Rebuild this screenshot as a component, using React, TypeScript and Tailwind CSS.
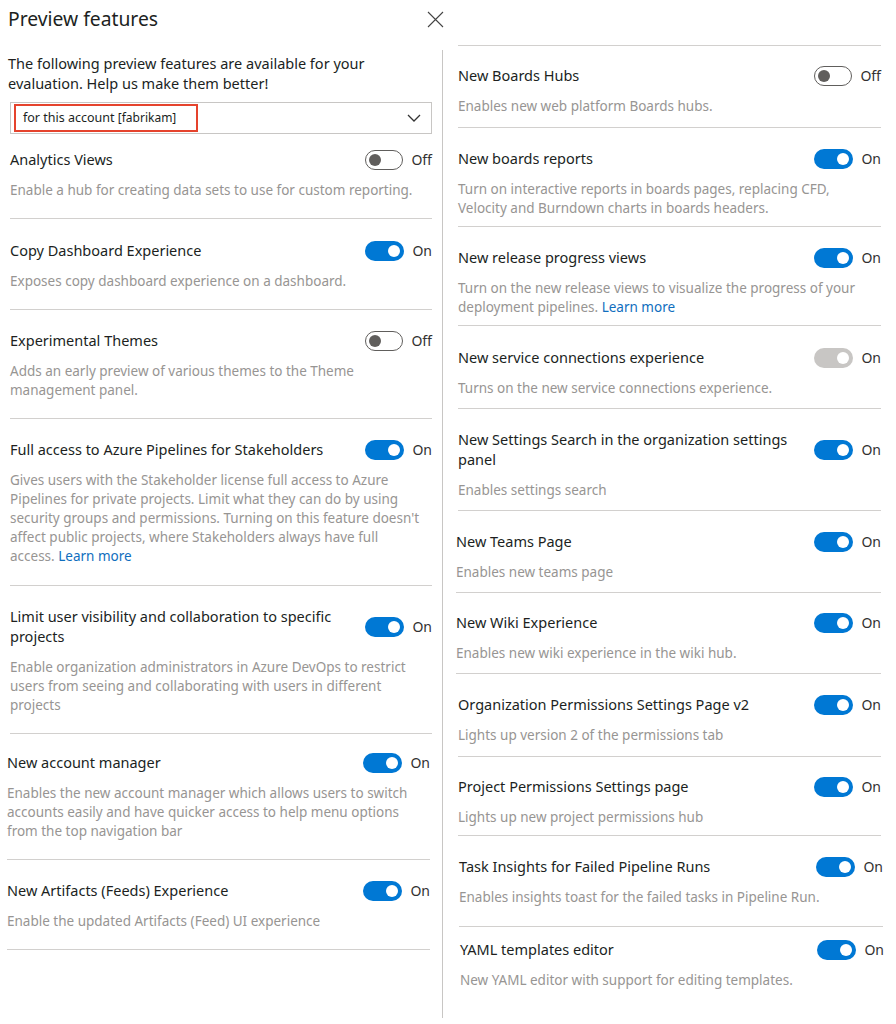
import React from "react";

type State = "on" | "off" | "disabled";

type Feature = {
  title: string[];
  desc: React.ReactNode[];
  state: State;
  box: string;
  last?: boolean;
};

const Learn = () => <span className="text-[#106ebe]">Learn more</span>;

const leftItems: Feature[] = [
  {
    title: ["Analytics Views"],
    desc: ["Enable a hub for creating data sets to use for custom reporting."],
    state: "off",
    box: "pt-[16px] pb-[19px]",
  },
  {
    title: ["Copy Dashboard Experience"],
    desc: ["Exposes copy dashboard experience on a dashboard."],
    state: "on",
    box: "pt-[22px] pb-[19px]",
  },
  {
    title: ["Experimental Themes"],
    desc: ["Adds an early preview of various themes to the Theme", "management panel."],
    state: "off",
    box: "pt-[21px] pb-[19px]",
  },
  {
    title: ["Full access to Azure Pipelines for Stakeholders"],
    desc: [
      "Gives users with the Stakeholder license full access to Azure",
      "Pipelines for private projects. Limit what they can do by using",
      "security groups and permissions. Turning on this feature doesn't",
      "affect public projects, where Stakeholders always have full",
      <>
        access. <Learn />
      </>,
    ],
    state: "on",
    box: "pt-[21px] pb-[20px]",
  },
  {
    title: ["Limit user visibility and collaboration to specific", "projects"],
    desc: [
      "Enable organization administrators in Azure DevOps to restrict",
      "users from seeing and collaborating with users in different",
      "projects",
    ],
    state: "on",
    box: "pt-[21px] pb-[19px]",
  },
  {
    title: ["New account manager"],
    desc: [
      "Enables the new account manager which allows users to switch",
      "accounts easily and have quicker access to help menu options",
      "from the top navigation bar",
    ],
    state: "on",
    box: "pt-[19px] pb-[19px] -ml-[3px] mr-[2px]",
  },
  {
    title: ["New Artifacts (Feeds) Experience"],
    desc: ["Enable the updated Artifacts (Feed) UI experience"],
    state: "on",
    box: "pt-[21px] pb-[19px] -ml-[3px] mr-[2px]",
  },
];

const rightItems: Feature[] = [
  {
    title: ["New Boards Hubs"],
    desc: ["Enables new web platform Boards hubs."],
    state: "off",
    box: "pt-[20px] pb-[12px]",
  },
  {
    title: ["New boards reports"],
    desc: [
      "Turn on interactive reports in boards pages, replacing CFD,",
      "Velocity and Burndown charts in boards headers.",
    ],
    state: "on",
    box: "pt-[21px] pb-[9px]",
  },
  {
    title: ["New release progress views"],
    desc: [
      "Turn on the new release views to visualize the progress of your",
      <>
        deployment pipelines. <Learn />
      </>,
    ],
    state: "on",
    box: "pt-[21px] pb-[9px]",
  },
  {
    title: ["New service connections experience"],
    desc: ["Turns on the new service connections experience."],
    state: "disabled",
    box: "pt-[22px] pb-[11px]",
  },
  {
    title: ["New Settings Search in the organization settings", "panel"],
    desc: ["Enables settings search"],
    state: "on",
    box: "pt-[21px] pb-[11px]",
  },
  {
    title: ["New Teams Page"],
    desc: ["Enables new teams page"],
    state: "on",
    box: "pt-[21px] pb-[11px] -ml-[2px]",
  },
  {
    title: ["New Wiki Experience"],
    desc: ["Enables new wiki experience in the wiki hub."],
    state: "on",
    box: "pt-[20px] pb-[11px] -ml-[2px]",
  },
  {
    title: ["Organization Permissions Settings Page v2"],
    desc: ["Lights up version 2 of the permissions tab"],
    state: "on",
    box: "pt-[21px] pb-[12px]",
  },
  {
    title: ["Project Permissions Settings page"],
    desc: ["Lights up new project permissions hub"],
    state: "on",
    box: "pt-[20px] pb-[9px]",
  },
  {
    title: ["Task Insights for Failed Pipeline Runs"],
    desc: ["Enables insights toast for the failed tasks in Pipeline Run."],
    state: "on",
    box: "pt-[21px] pb-[20px] ml-[1px] -mr-[2px]",
  },
  {
    title: ["YAML templates editor"],
    desc: ["New YAML editor with support for editing templates."],
    state: "on",
    box: "pt-[13px] pb-[19px] ml-[2px] -mr-[3px]",
    last: true,
  },
];

function Toggle({ state }: { state: State }) {
  if (state === "off") {
    return (
      <div className="w-10 h-5 rounded-full border border-[#605e5c] bg-white flex items-center pl-[3px]">
        <div className="w-3 h-3 rounded-full bg-[#605e5c]" />
      </div>
    );
  }
  const track = state === "on" ? "bg-[#0078d4]" : "bg-[#c8c6c4]";
  return (
    <div className={`w-10 h-5 rounded-full ${track} flex items-center justify-end pr-[4px]`}>
      <div className="w-3 h-3 rounded-full bg-white" />
    </div>
  );
}

function FeatureRow({ f }: { f: Feature }) {
  return (
    <div className={`${f.box} ${f.last ? "" : "border-b border-[#d2d0ce]"}`}>
      <div className="flex items-center">
        <div className="flex-1 text-[14.5px] leading-[20px] text-[#201f1e] whitespace-nowrap -mt-[1px] mb-[1px]">
          {f.title.map((t, i) => (
            <div key={i}>{t}</div>
          ))}
        </div>
        <div className="w-[67px] shrink-0 flex items-center">
          <Toggle state={f.state} />
          <span className="ml-[8px] text-[14px] leading-[20px] text-[#323130]">
            {f.state === "off" ? "Off" : "On"}
          </span>
        </div>
      </div>
      <div className="mt-[11px] -mb-[1px] text-[13.5px] leading-[19px] text-[#979593] whitespace-nowrap">
        {f.desc.map((d, i) => (
          <div key={i}>{d}</div>
        ))}
      </div>
    </div>
  );
}

export default function App() {
  return (
    <div
      className="w-[896px] h-[1024px] bg-white flex overflow-hidden"
      style={{ fontFamily: '"Segoe UI", "Noto Sans", sans-serif' }}
    >
      <div className="w-[443px] shrink-0 flex flex-col">
        <div className="h-[50px] relative">
          <div className="pl-[8px] pt-[5px] text-[19.3px] leading-[28px] text-[#201f1e]">
            Preview features
          </div>
          <svg
            className="absolute left-[427px] top-[11px]"
            width="17"
            height="17"
            viewBox="0 0 17 17"
            fill="none"
          >
            <path d="M1 1 L16 16 M16 1 L1 16" stroke="#444" strokeWidth="1.1" />
          </svg>
        </div>
        <div className="h-[968px] border-r border-[#c8c6c4] pl-[10px] pr-[10px]">
          <div className="-ml-[2px] pt-[3px] text-[14.5px] leading-[20px] text-[#201f1e]">
            <div>The following preview features are available for your</div>
            <div>evaluation. Help us make them better!</div>
          </div>
          <div className="relative mt-[9px] h-[32px] border border-[#c8c6c4] flex items-center pl-[12px] pr-[10px]">
            <span className="flex-1 text-[12.5px] text-[#201f1e]">
              for this account <span className="text-[12px]">[fabrikam]</span>
            </span>
            <svg width="14" height="8" viewBox="0 0 14 8" fill="none">
              <path d="M1 1 L7 7 L13 1" stroke="#333" strokeWidth="1.3" />
            </svg>
            <div className="absolute left-[3px] top-[1px] w-[184px] h-[28px] border-2 border-[#e5432d]" />
          </div>
          {leftItems.map((f, i) => (
            <FeatureRow key={i} f={f} />
          ))}
        </div>
      </div>
      <div className="flex-1 pt-[45px] px-[15px]">
        <div className="border-t border-[#d2d0ce]">
          {rightItems.map((f, i) => (
            <FeatureRow key={i} f={f} />
          ))}
        </div>
      </div>
    </div>
  );
}
